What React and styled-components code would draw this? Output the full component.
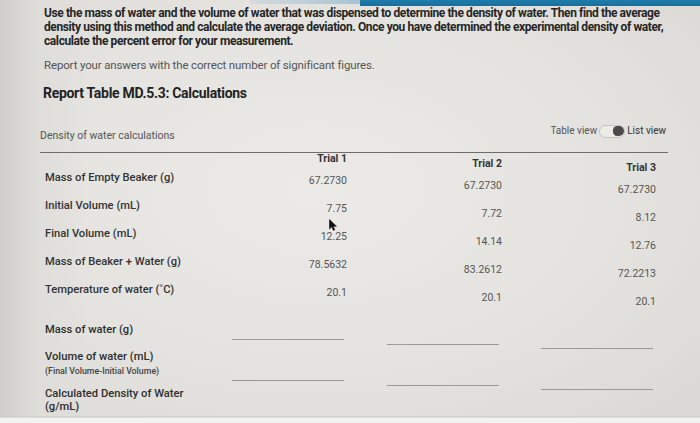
import React from 'react';
import styled, { createGlobalStyle } from 'styled-components';

const Global = createGlobalStyle`
  html, body { margin: 0; padding: 0; }
  body {
    width: 700px; height: 423px; overflow: hidden;
    font-family: Roboto, "Liberation Sans", Arial, sans-serif;
    background: #e6e5e1;
  }
`;

const Page = styled.div`
  position: relative;
  width: 700px;
  height: 423px;
  box-sizing: border-box;
  padding: 6px 0 0 44px;
  overflow: hidden;
  background:
    linear-gradient(to bottom, #1f7dab 0, #1a6e9c 6px, transparent 6px) 360px 0 / 340px 7px no-repeat,
    linear-gradient(to right, #d6dadd, #a9c3d3) 250px 0 / 110px 4px no-repeat,
    linear-gradient(to bottom, transparent 416px, #c9c8c4 417px, #f3f3f1 418px),
    linear-gradient(to right, #cfcecb 0, #dfdeda 40px, transparent 90px),
    radial-gradient(ellipse at 45% 45%, #ebeae7 0, #e4e3df 55%, #d9d8d4 100%);
`;

const Intro = styled.p`
  margin: 0;
  font-size: 12px;
  font-weight: 700;
  line-height: 14px;
  letter-spacing: -0.4px;
  color: #262626;
  white-space: nowrap;
`;

const Note = styled.p`
  margin: 10px 0 0;
  font-size: 11.5px;
  line-height: 14px;
  letter-spacing: -0.15px;
  color: #555;
`;

const Heading = styled.h2`
  margin: 12px 0 0 -1px;
  font-size: 14px;
  line-height: 18px;
  font-weight: 700;
  letter-spacing: -0.3px;
  color: #222;
`;

const Toolbar = styled.div`
  margin: 22px 0 0 -4px;
  width: 628px;
  height: 28px;
  border-bottom: 1.5px solid #6d6d6b;
  display: flex;
  justify-content: space-between;
`;

const ToolTitle = styled.div`
  align-self: flex-end;
  margin-bottom: 9px;
  font-size: 10.5px;
  line-height: 14px;
  color: #555;
`;

const ViewToggle = styled.div`
  align-self: flex-start;
  display: flex;
  align-items: center;
  gap: 2px;
  margin-right: 2px;
  font-size: 10px;
  line-height: 14px;
`;

const ToggleLabel = styled.span`
  color: ${p => (p.$active ? '#333' : '#555')};
`;

const Track = styled.span`
  width: 24px;
  height: 11px;
  border-radius: 6px;
  background: #ecebe8;
  border: 1px solid #c4c4c1;
  display: flex;
  justify-content: flex-end;
  align-items: center;
`;

const Knob = styled.span`
  width: 11px;
  height: 10px;
  border-radius: 5px 6px 6px 5px;
  background: #4a4a4a;
`;

const Table = styled.div`
  position: relative;
  display: grid;
  grid-template-columns: 190px 113px 155px 154px;
  margin-left: 1px;
`;

const Column = styled.div`
  display: flex;
  flex-direction: column;
  align-items: ${p => (p.$label ? 'flex-start' : 'flex-end')};
  padding-top: ${p => p.$shift}px;
`;

const HeaderCell = styled.div`
  height: 14px;
  line-height: 12px;
  font-size: 10.5px;
  font-weight: 700;
  color: #333;
  margin-right: 1px;
`;

const Value = styled.div`
  height: 28px;
  line-height: 28px;
  font-size: 10.5px;
  color: #555;
  margin-right: 1px;
`;

const RowLabel = styled.div`
  height: 28px;
  line-height: 28px;
  font-size: 11.2px;
  font-weight: 500;
  color: #333;
`;

const AnswerLabel = styled.div`
  margin-top: ${p => p.$gap}px;
  font-size: 11.2px;
  font-weight: 500;
  line-height: 13px;
  color: #2e2e2e;
`;

const SubNote = styled.div`
  margin-top: 3px;
  font-size: 8.8px;
  line-height: 10px;
  font-weight: 500;
  color: #444;
`;

const BlankLine = styled.div`
  width: 112px;
  height: 0;
  margin-top: ${p => p.$gap}px;
  margin-right: 4px;
  border-top: 1px solid #9a9a98;
`;

const Pointer = styled.svg`
  position: absolute;
  left: 284px;
  top: 66px;
  width: 8px;
  height: 12px;
`;

const trials = [
  { name: 'Trial 1', shift: 0, values: ['67.2730', '7.75', '12.25', '78.5632', '20.1'] },
  { name: 'Trial 2', shift: 5, values: ['67.2730', '7.72', '14.14', '83.2612', '20.1'] },
  { name: 'Trial 3', shift: 9, values: ['67.2730', '8.12', '12.76', '72.2213', '20.1'] },
];

const labels = [
  'Mass of Empty Beaker (g)',
  'Initial Volume (mL)',
  'Final Volume (mL)',
  'Mass of Beaker + Water (g)',
  'Temperature of water (\u02DAC)',
];

export default function App() {
  return (
    <>
      <Global />
      <Page>
        <Intro>
          Use the mass of water and the volume of water that was dispensed to determine the density of water. Then find the average
          <br />
          density using this method and calculate the average deviation. Once you have determined the experimental density of water,
          <br />
          calculate the percent error for your measurement.
        </Intro>
        <Note>Report your answers with the correct number of significant figures.</Note>
        <Heading>Report Table MD.5.3: Calculations</Heading>
        <Toolbar>
          <ToolTitle>Density of water calculations</ToolTitle>
          <ViewToggle>
            <ToggleLabel>Table view</ToggleLabel>
            <Track>
              <Knob />
            </Track>
            <ToggleLabel $active>List view</ToggleLabel>
          </ViewToggle>
        </Toolbar>
        <Table>
          <Column $label $shift={11}>
            {labels.map(l => (
              <RowLabel key={l}>{l}</RowLabel>
            ))}
            <AnswerLabel $gap={19}>Mass of water (g)</AnswerLabel>
            <AnswerLabel $gap={14}>Volume of water (mL)</AnswerLabel>
            <SubNote>(Final Volume-Initial Volume)</SubNote>
            <AnswerLabel $gap={11}>
              Calculated Density of Water
              <br />
              (g/mL)
            </AnswerLabel>
          </Column>
          {trials.map(t => (
            <Column key={t.name} $shift={t.shift}>
              <HeaderCell>{t.name}</HeaderCell>
              {t.values.map((v, i) => (
                <Value key={i}>{v}</Value>
              ))}
              <BlankLine $gap={32} />
              <BlankLine $gap={40} />
            </Column>
          ))}
          <Pointer viewBox="0 0 8 12">
            <path d="M0.5 0.5 L0.5 10 L2.8 7.8 L4.4 11.4 L5.8 10.8 L4.3 7.3 L7.4 7.2 Z" fill="#111" stroke="#111" strokeWidth="0.6" strokeLinejoin="round" />
          </Pointer>
        </Table>
      </Page>
    </>
  );
}
